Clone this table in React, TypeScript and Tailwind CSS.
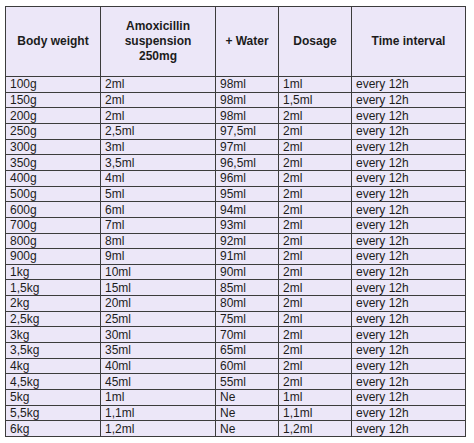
import React from "react";

const rows: string[][] = [
  ["100g", "2ml", "98ml", "1ml"],
  ["150g", "2ml", "98ml", "1,5ml"],
  ["200g", "2ml", "98ml", "2ml"],
  ["250g", "2,5ml", "97,5ml", "2ml"],
  ["300g", "3ml", "97ml", "2ml"],
  ["350g", "3,5ml", "96,5ml", "2ml"],
  ["400g", "4ml", "96ml", "2ml"],
  ["500g", "5ml", "95ml", "2ml"],
  ["600g", "6ml", "94ml", "2ml"],
  ["700g", "7ml", "93ml", "2ml"],
  ["800g", "8ml", "92ml", "2ml"],
  ["900g", "9ml", "91ml", "2ml"],
  ["1kg", "10ml", "90ml", "2ml"],
  ["1,5kg", "15ml", "85ml", "2ml"],
  ["2kg", "20ml", "80ml", "2ml"],
  ["2,5kg", "25ml", "75ml", "2ml"],
  ["3kg", "30ml", "70ml", "2ml"],
  ["3,5kg", "35ml", "65ml", "2ml"],
  ["4kg", "40ml", "60ml", "2ml"],
  ["4,5kg", "45ml", "55ml", "2ml"],
  ["5kg", "1ml", "Ne", "1ml"],
  ["5,5kg", "1,1ml", "Ne", "1,1ml"],
  ["6kg", "1,2ml", "Ne", "1,2ml"],
];

export default function App() {
  return (
    <div className="w-[474px] h-[443px] bg-white pt-[6px] pl-[5px] font-['Liberation_Sans',Arial,sans-serif] text-[#1c1c1c]">
      <div className="w-[461px] h-[431px] grid grid-cols-[94px_114px_62px_72px_113px] grid-rows-[69px_repeat(23,minmax(0,1fr))] gap-px p-px bg-[#3c3c3c]">
        <div className="bg-[#ece7f8] flex items-center justify-center text-[12px] font-bold leading-[15px] text-center">
          Body weight
        </div>
        <div className="bg-[#ece7f8] flex items-center justify-center text-[12px] font-bold leading-[15px] text-center">
          Amoxicillin
          <br />
          suspension
          <br />
          250mg
        </div>
        <div className="bg-[#ece7f8] flex items-center justify-center text-[12px] font-bold leading-[15px] text-center">
          + Water
        </div>
        <div className="bg-[#ece7f8] flex items-center justify-center text-[12px] font-bold leading-[15px] text-center">
          Dosage
        </div>
        <div className="bg-[#ece7f8] flex items-center justify-center text-[12px] font-bold leading-[15px] text-center">
          Time interval
        </div>
        {rows.map((r, i) => (
          <React.Fragment key={i}>
            {[...r, "every 12h"].map((c, j) => (
              <div
                key={j}
                className="bg-[#ece7f8] flex items-center pl-[4px] text-[12px] leading-none overflow-hidden"
              >
                {c}
              </div>
            ))}
          </React.Fragment>
        ))}
      </div>
    </div>
  );
}
